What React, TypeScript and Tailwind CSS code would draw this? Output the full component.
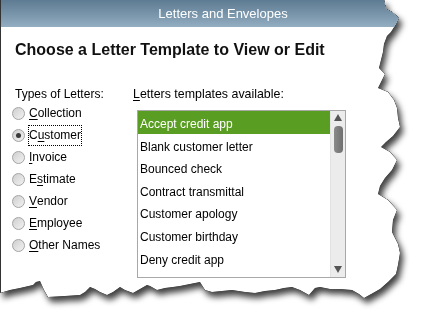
import React from "react";

const letterTypes = [
  { pre: "", key: "C", post: "ollection" },
  { pre: "C", key: "u", post: "stomer" },
  { pre: "", key: "I", post: "nvoice" },
  { pre: "E", key: "s", post: "timate" },
  { pre: "", key: "V", post: "endor" },
  { pre: "", key: "E", post: "mployee" },
  { pre: "", key: "O", post: "ther Names" },
];

const templates = [
  "Accept credit app",
  "Blank customer letter",
  "Bounced check",
  "Contract transmittal",
  "Customer apology",
  "Customer birthday",
  "Deny credit app",
];

const Radio: React.FC<{ checked?: boolean }> = ({ checked }) => (
  <span className="flex h-[13px] w-[13px] shrink-0 items-center justify-center rounded-full border border-[#a3a3a3] bg-gradient-to-br from-[#cfcfcf] to-[#f2f2f2]">
    {checked && <span className="h-[5px] w-[5px] rounded-full bg-[#3a3a3a]" />}
  </span>
);

export default function App() {
  const selectedType = 1;

  return (
    <div className="relative h-[324px] w-[424px] overflow-hidden bg-white font-['Liberation_Sans',Arial,sans-serif] text-black">
      <div className="[filter:drop-shadow(0_0_0.5px_#000)_drop-shadow(0_0_0.5px_#000)_drop-shadow(3px_5px_3px_rgba(0,0,0,0.75))]">
        <div className="h-[324px] w-[424px] border-l border-[#333] bg-white [clip-path:polygon(0px_0px,384px_0px,386px_9px,392px_12px,399px_18px,396px_24px,391px_32px,387px_36px,384px_44px,383px_52px,381px_60px,379px_68px,385px_74px,378px_88px,388px_92px,394px_100px,397px_108px,398px_118px,400px_127px,393px_136px,386px_142px,381px_147px,390px_152px,397px_160px,392px_170px,385px_178px,380px_186px,378px_194px,388px_200px,397px_210px,393px_220px,392px_232px,398px_244px,400px_253px,398px_265px,396px_274px,388px_282px,380px_289px,373px_293px,364px_298px,359px_294px,352px_290px,340px_289px,330px_289px,320px_287px,315px_288px,309px_295px,300px_290px,292px_287px,284px_288px,275px_290px,265px_291px,255px_293px,245px_292px,232px_290px,222px_291px,212px_292px,205px_290px,200px_282px,190px_284px,180px_286px,173px_287px,165px_288px,157px_290px,150px_286px,147px_285px,140px_289px,133px_293px,125px_290px,120px_287px,113px_292px,107px_295px,100px_292px,95px_289px,90px_287px,85px_292px,80px_295px,65px_296px,48px_297px,44px_290px,40px_281px,36px_282px,33px_285px,20px_288px,10px_290px,0px_293px)]">
          {/* title bar */}
          <div className="flex h-[27px] items-center justify-center bg-gradient-to-b from-[#5d7b92] to-[#93adc1] pl-[21px] text-[13px] text-white">
            Letters and Envelopes
          </div>

          <div className="mt-[13px] pl-[14px] text-[16px] leading-[20px] font-bold text-[#111]">
            Choose a Letter Template to View or Edit
          </div>

          <div className="mt-[26px] flex">
            {/* letter types */}
            <div className="w-[132px] text-[12px] leading-[16px]">
              <div className="pl-[14px]">Types of Letters:</div>
              {letterTypes.map((t, i) => (
                <div key={i} className="flex h-[22px] items-center gap-[3px] pl-[11px]">
                  <Radio checked={i === selectedType} />
                  <span
                    className={`flex h-[21px] items-center border ${
                      i === selectedType ? "border-dotted border-black" : "border-transparent"
                    }`}
                  >
                    {t.pre}
                    <span className="underline underline-offset-2">{t.key}</span>
                    {t.post}
                  </span>
                </div>
              ))}
            </div>

            {/* templates */}
            <div className="text-[12px] leading-[16px]">
              <div className="text-[12.4px]">
                <span className="underline underline-offset-2">L</span>etters templates available:
              </div>
              <div className="mt-[8px] ml-[4px] flex h-[168px] w-[209px] border border-[#a8a8a8] bg-white">
                <div className="flex-1">
                  {templates.map((name, i) => (
                    <div
                      key={name}
                      className={`h-[22.6px] pt-[5px] pl-[2px] ${
                        i === 0 ? "bg-[#5a9d23] text-white" : ""
                      }`}
                    >
                      {name}
                    </div>
                  ))}
                </div>
                <div className="relative w-[15px] border-l border-[#e2e2e2] bg-[#ececec]">
                  <svg className="absolute top-[2px] left-[2px]" width="10" height="9" viewBox="0 0 10 9">
                    <polygon points="5,1 9,8 1,8" fill="#555" />
                  </svg>
                  <div className="absolute top-[15px] left-[3px] h-[27px] w-[9px] rounded-[4px] bg-gradient-to-r from-[#8a8a8a] to-[#6f6f6f]" />
                  <svg className="absolute bottom-[3px] left-[2px]" width="10" height="9" viewBox="0 0 10 9">
                    <polygon points="1,1 9,1 5,8" fill="#555" />
                  </svg>
                </div>
              </div>
            </div>
          </div>
        </div>
      </div>
    </div>
  );
}
